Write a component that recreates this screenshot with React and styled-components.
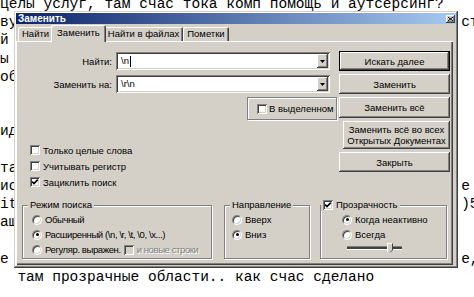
import React from 'react';
import styled, { createGlobalStyle } from 'styled-components';

const FACE = '#d4d0c8';
const UI_FONT = '"Liberation Sans", Arial, sans-serif';

const GlobalStyle = createGlobalStyle`
  html, body {
    margin: 0;
    padding: 0;
    background: #fff;
  }
`;

const raised = `
  box-shadow: inset -1px -1px #404040, inset 1px 1px #fff,
    inset -2px -2px #808080, inset 2px 2px ${FACE};
`;

const sunken = `
  box-shadow: inset 1px 1px #808080, inset -1px -1px #fff,
    inset 2px 2px #404040, inset -2px -2px ${FACE};
`;

// the dialog hides the middle of each line, only its two ends are seen
const LINES = [
  ['целы услуг, там счас тока комп помощь и аутсерсинг?'],
  ['ву', 'ст'],
  ['й'],
  ['ы'],
  ['об'],
  [''],
  [''],
  ['ид'],
  [''],
  ['та'],
  ['ис', 'е'],
  ['it', ')5'],
  ['ащ'],
  [''],
  ['е', 'е,'],
  ['  там прозрачные области.. как счас сделано'],
];

const Editor = styled.div`
  position: relative;
  width: 474px;
  height: 297px;
  overflow: hidden;
  background: #fff;
  font-family: "Liberation Mono", "Courier New", monospace;
  font-size: 14.5px;
  color: #000;
`;

const Line = styled.div`
  display: grid;
  grid-template-columns: 53ch auto;
  height: ${({ $first }) => ($first ? 8 : 18.2)}px;
  margin-bottom: ${({ $first }) => ($first ? 5.2 : 0)}px;
  line-height: ${({ $first }) => ($first ? 8 : 18.2)}px;
  white-space: pre;
`;

const Window = styled.div`
  position: absolute;
  left: 14px;
  top: 11px;
  width: 444px;
  height: 257px;
  box-sizing: border-box;
  padding: 2px;
  display: flex;
  flex-direction: column;
  background: ${FACE};
  box-shadow: inset -1px -1px #404040, inset 1px 1px ${FACE},
    inset -2px -2px #808080, inset 2px 2px #fff;
  font-family: ${UI_FONT};
  font-size: 9.5px;
  color: #000;
`;

const TitleBar = styled.div`
  height: 11px;
  display: flex;
  align-items: center;
  justify-content: space-between;
  padding: 0 1px 0 2px;
  background: linear-gradient(to right, #0a246a, #a6caf0);
`;

const Title = styled.span`
  color: #fff;
  font-weight: bold;
  font-size: 10px;
  line-height: 11px;
`;

const CloseButton = styled.button`
  width: 9px;
  height: 8px;
  padding: 0;
  border: none;
  display: flex;
  align-items: center;
  justify-content: center;
  background: ${FACE};
  ${raised}
`;

const TabStrip = styled.div`
  height: 17px;
  display: flex;
  align-items: flex-end;
  padding-left: 2px;
`;

const Tab = styled.div`
  position: relative;
  height: ${({ $active }) => ($active ? 17 : 14)}px;
  margin: ${({ $active }) => ($active ? '0 -2px -1px' : '0')};
  padding: ${({ $active }) => ($active ? '1px 6px 0' : '0 4px')};
  box-sizing: border-box;
  z-index: ${({ $active }) => ($active ? 1 : 0)};
  line-height: 14px;
  white-space: nowrap;
  background: ${FACE};
  border-radius: 2px 2px 0 0;
  box-shadow: inset 1px 1px #fff, inset -1px 0 #404040, inset -2px 0 #808080;
`;

const Panel = styled.div`
  flex: 1;
  margin: 0 3px 1px 0;
  padding: 10px 3px 0 1px;
  display: flex;
  flex-direction: column;
  box-shadow: inset 1px 1px #fff, inset -1px -1px #404040, inset -2px -2px #808080;
`;

const TopArea = styled.div`
  display: flex;
  gap: 2px;
`;

const LeftColumn = styled.div`
  flex: 1;
  display: flex;
  flex-direction: column;
`;

const FieldRow = styled.div`
  height: 18px;
  margin-top: ${({ $mt }) => $mt}px;
  display: flex;
  align-items: center;
`;

const FieldLabel = styled.label`
  width: 95px;
  margin-right: 4px;
  text-align: right;
`;

const Combo = styled.div`
  width: 214px;
  height: 18px;
  box-sizing: border-box;
  padding: 2px;
  display: flex;
  background: #fff;
  ${sunken}
`;

const ComboText = styled.span`
  flex: 1;
  display: flex;
  align-items: center;
  padding-left: 3px;
  line-height: 14px;
`;

const Caret = styled.span`
  width: 1px;
  height: 11px;
  margin-left: 1px;
  background: #000;
`;

const DropButton = styled.span`
  width: 11px;
  display: flex;
  align-items: center;
  justify-content: center;
  background: ${FACE};
  ${raised}
`;

const SelectionBox = styled.div`
  align-self: flex-end;
  width: 90px;
  height: 23px;
  margin-top: 4px;
  box-sizing: border-box;
  padding-left: 9px;
  display: flex;
  align-items: center;
  gap: 2px;
  border: 1px solid #808080;
  box-shadow: inset 1px 1px #fff, 1px 1px #fff;
`;

const CheckList = styled.div`
  margin-top: 22px;
  padding-left: 13px;
  display: flex;
  flex-direction: column;
`;

const OptionRow = styled.div`
  height: ${({ $h }) => $h || 15}px;
  display: flex;
  align-items: center;
  gap: 3px;
  white-space: nowrap;
`;

const ButtonColumn = styled.div`
  width: 111px;
  display: flex;
  flex-direction: column;
  align-items: flex-end;
  gap: 3px;
`;

const Button = styled.button`
  width: ${({ $w }) => $w || 111}px;
  height: ${({ $h }) => $h || 20}px;
  padding: 0;
  border: ${({ $default }) => ($default ? '1px solid #000' : 'none')};
  box-sizing: border-box;
  background: ${FACE};
  font-family: ${UI_FONT};
  font-size: 9.5px;
  line-height: 11px;
  color: #000;
  ${raised}
`;

const GroupsRow = styled.div`
  height: 60px;
  margin-top: 9px;
  padding-left: 5px;
  display: flex;
`;

const Group = styled.fieldset`
  width: ${({ $w }) => $w}px;
  min-width: 0;
  margin: 0 0 0 ${({ $ml }) => $ml || 0}px;
  padding: 0;
  box-sizing: border-box;
  border: 1px solid #808080;
  box-shadow: inset 1px 1px #fff, 1px 1px #fff;
`;

const GroupTitle = styled.legend`
  margin-left: ${({ $ml }) => $ml ?? 5}px;
  padding: 0 2px;
  display: flex;
  align-items: center;
  gap: 3px;
  line-height: 12px;
  background: ${FACE};
`;

const GroupBody = styled.div`
  padding: 1px 0 0 ${({ $pl }) => $pl}px;
  letter-spacing: ${({ $tight }) => ($tight ? '-0.4px' : 'normal')};
`;

const CheckBox = styled.span`
  width: 10px;
  height: 10px;
  flex-shrink: 0;
  display: flex;
  align-items: center;
  justify-content: center;
  background: ${({ $disabled }) => ($disabled ? FACE : '#fff')};
  ${sunken}
`;

const Radio = styled.span`
  position: relative;
  width: 10px;
  height: 10px;
  flex-shrink: 0;
  box-sizing: border-box;
  border-radius: 50%;
  border: 1px solid;
  border-color: #808080 #fff #fff #808080;
  background: #fff;
  box-shadow: inset 1px 1px #404040, inset -1px -1px ${FACE};

  &::after {
    content: '';
    display: ${({ $on }) => ($on ? 'block' : 'none')};
    position: absolute;
    left: 2.5px;
    top: 2.5px;
    width: 3px;
    height: 3px;
    border-radius: 50%;
    background: #000;
  }
`;

const Disabled = styled.span`
  color: #808080;
  text-shadow: 1px 1px #fff;
`;

const SliderRow = styled.div`
  height: 12px;
  padding-left: 5px;
  display: flex;
  align-items: center;
`;

const Track = styled.div`
  width: 55px;
  height: 2px;
  display: flex;
  align-items: center;
  border-top: 1px solid #808080;
  border-bottom: 1px solid #fff;
  background: #404040;
`;

const Thumb = styled.svg`
  margin-left: ${({ $at }) => $at}px;
  flex-shrink: 0;
`;

const Check = ({ on, disabled }) => (
  <CheckBox $disabled={disabled}>
    {on && (
      <svg width="8" height="8" viewBox="0 0 8 8">
        <path d="M1.2 3.6 L3 5.6 L6.8 1.6" fill="none" stroke="#000" strokeWidth="1.6" />
      </svg>
    )}
  </CheckBox>
);

const ComboBox = ({ value, caret }) => (
  <Combo>
    <ComboText>
      {value}
      {caret && <Caret />}
    </ComboText>
    <DropButton>
      <svg width="5" height="3" viewBox="0 0 5 3">
        <path d="M0 0 H5 L2.5 3 Z" fill="#000" />
      </svg>
    </DropButton>
  </Combo>
);

const App = () => (
  <>
    <GlobalStyle />
    <Editor>
      {LINES.map(([left, right], i) => (
        <Line key={i} $first={i === 0}>
          <span>{left}</span>
          {right && <span>{right}</span>}
        </Line>
      ))}
      <Window>
        <TitleBar>
          <Title>Заменить</Title>
          <CloseButton aria-label="Закрыть">
            <svg width="5" height="4" viewBox="0 0 5 4">
              <path d="M0 0 L5 4 M5 0 L0 4" stroke="#000" strokeWidth="1" />
            </svg>
          </CloseButton>
        </TitleBar>
        <TabStrip>
          <Tab>Найти</Tab>
          <Tab $active>Заменить</Tab>
          <Tab>Найти в файлах</Tab>
          <Tab>Пометки</Tab>
        </TabStrip>
        <Panel>
          <TopArea>
            <LeftColumn>
              <FieldRow $mt={1}>
                <FieldLabel>Найти:</FieldLabel>
                <ComboBox value="\n" caret />
              </FieldRow>
              <FieldRow $mt={5}>
                <FieldLabel>Заменить на:</FieldLabel>
                <ComboBox value="\r\n" />
              </FieldRow>
              <SelectionBox>
                <Check />
                <span>В выделенном</span>
              </SelectionBox>
              <CheckList>
                <OptionRow $h={16}>
                  <Check />
                  Только целые слова
                </OptionRow>
                <OptionRow $h={16}>
                  <Check />
                  Учитывать регистр
                </OptionRow>
                <OptionRow $h={16}>
                  <Check on />
                  Зациклить поиск
                </OptionRow>
              </CheckList>
            </LeftColumn>
            <ButtonColumn>
              <Button $default>Искать далее</Button>
              <Button>Заменить</Button>
              <Button $h={21}>Заменить всё</Button>
              <Button $w={107} $h={28}>
                Заменить всё во всех
                <br />
                Открытых Документах
              </Button>
              <Button>Закрыть</Button>
            </ButtonColumn>
          </TopArea>
          <GroupsRow>
            <Group $w={190}>
              <GroupTitle>Режим поиска</GroupTitle>
              <GroupBody $pl={9} $tight>
                <OptionRow>
                  <Radio />
                  Обычный
                </OptionRow>
                <OptionRow>
                  <Radio $on />
                  Расширенный (\n, \r, \t, \0, \x...)
                </OptionRow>
                <OptionRow>
                  <Radio />
                  Регуляр. выражен.
                  <Check disabled />
                  <Disabled>и новые строки</Disabled>
                </OptionRow>
              </GroupBody>
            </Group>
            <Group $w={86} $ml={12}>
              <GroupTitle>Направление</GroupTitle>
              <GroupBody $pl={7}>
                <OptionRow>
                  <Radio />
                  Вверх
                </OptionRow>
                <OptionRow>
                  <Radio $on />
                  Вниз
                </OptionRow>
              </GroupBody>
            </Group>
            <Group $w={127} $ml={10}>
              <GroupTitle $ml={0}>
                <Check on />
                Прозрачность
              </GroupTitle>
              <GroupBody $pl={21}>
                <OptionRow>
                  <Radio $on />
                  Когда неактивно
                </OptionRow>
                <OptionRow>
                  <Radio />
                  Всегда
                </OptionRow>
                <SliderRow>
                  <Track>
                    <Thumb $at={40} width="6" height="10" viewBox="0 0 6 10">
                      <path d="M0.5 9 V0.5 H5.5 V7 L3 9.5" fill={FACE} stroke="#fff" strokeWidth="1" />
                      <path d="M5.5 0.5 V7 L3 9.5" fill="none" stroke="#404040" strokeWidth="1" />
                    </Thumb>
                  </Track>
                </SliderRow>
              </GroupBody>
            </Group>
          </GroupsRow>
        </Panel>
      </Window>
    </Editor>
  </>
);

export default App;
